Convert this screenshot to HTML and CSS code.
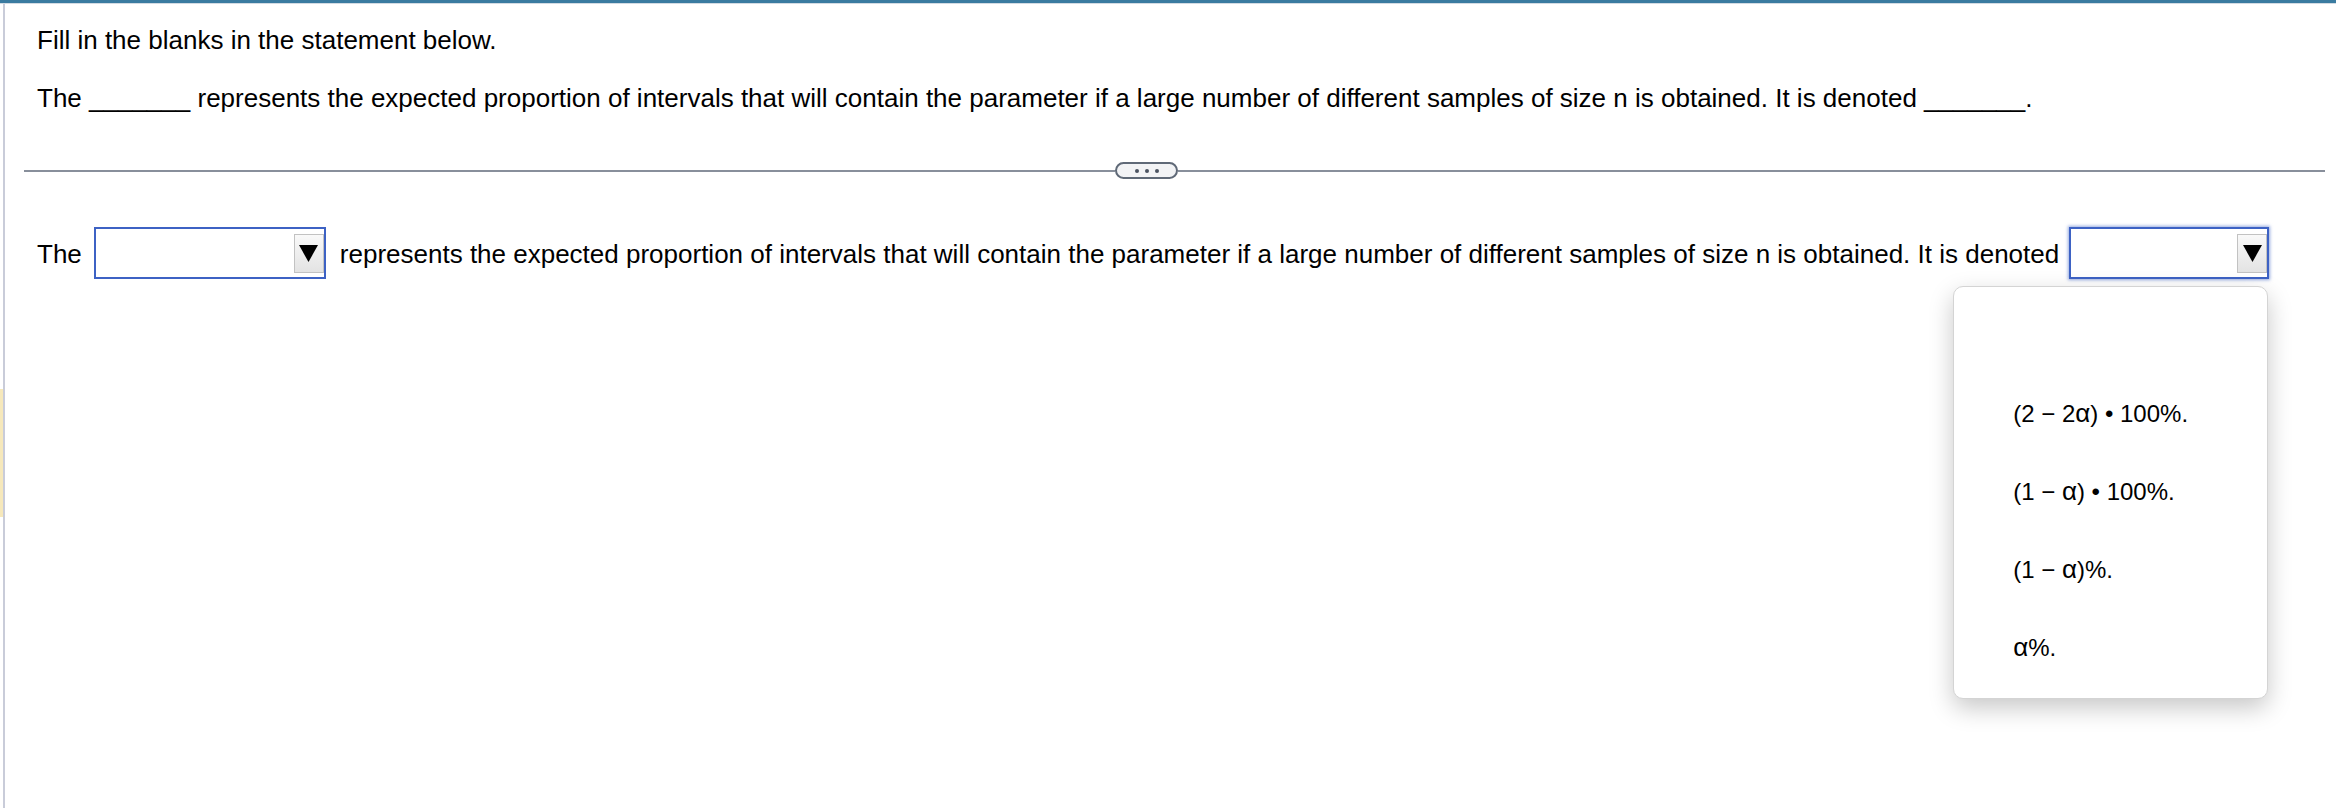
FILE: index.html
```html
<!DOCTYPE html>
<html lang="en">
<head>
<meta charset="utf-8">
<title>Fill in the blanks</title>
<link rel="stylesheet" href="styles.css">
</head>
<body>
<div class="topbar"></div>
<div class="frame">
  <div class="gutter"><div class="marker"></div></div>
  <main class="content">
    <p class="line instr">Fill in the blanks in the statement below.</p>
    <p class="line stmt">The _______ represents the expected proportion of intervals that will contain the parameter if a large number of different samples of size n is obtained. It is denoted _______.</p>
    <div class="divider">
      <span class="rule rule-left"></span>
      <button class="more" type="button" aria-label="Show more"><i></i><i></i><i></i></button>
      <span class="rule rule-right"></span>
    </div>
    <div class="answer">
      <span class="txt">The</span>
      <div class="select select-first">
        <span class="arrow"><svg width="19" height="17" viewBox="0 0 19 17"><polygon points="0,0 19,0 9.5,17" fill="#000"/></svg></span>
      </div>
      <span class="txt">represents the expected proportion of intervals that will contain the parameter if a large number of different samples of size n is obtained. It is denoted</span>
      <div class="select select-open">
        <span class="arrow"><svg width="19" height="17" viewBox="0 0 19 17"><polygon points="0,0 19,0 9.5,17" fill="#000"/></svg></span>
        <ul class="menu">
          <li>(2 − 2<span class="alpha">α</span>) • 100%.</li>
          <li>(1 − <span class="alpha">α</span>) • 100%.</li>
          <li>(1 − <span class="alpha">α</span>)%.</li>
          <li><span class="alpha">α</span>%.</li>
        </ul>
      </div>
    </div>
  </main>
</div>
</body>
</html>
```

FILE: styles.css
```css
html, body {
  margin: 0;
  padding: 0;
  background: #ffffff;
}

body {
  width: 2336px;
  height: 808px;
  overflow: hidden;
  font-family: "Liberation Sans", Arial, Helvetica, sans-serif;
  color: #000;
}

.topbar {
  height: 3px;
  background: #3a7ba0;
  border-bottom: 1px solid #d3dbe3;
}

.frame {
  display: flex;
  height: 804px;
}

.gutter {
  width: 3px;
  flex: 0 0 3px;
}

.marker {
  margin-top: 385px;
  height: 128px;
  background: #f6e8bb;
}

.content {
  flex: 1;
  border-left: 2px solid #c9ccd9;
  padding: 21px 11px 0 32px;
  font-size: 26px;
  line-height: 30px;
}

.line {
  margin: 0;
  white-space: nowrap;
}

.stmt {
  margin-top: 28px;
}

.divider {
  display: flex;
  align-items: center;
  margin: 49px 0 0 -13px;
  height: 17px;
}

.rule {
  height: 2px;
  background: #888f9b;
}

.rule-left {
  flex: 0 0 1091px;
}

.rule-right {
  flex: 1;
}

.more {
  box-sizing: border-box;
  width: 63px;
  height: 17px;
  padding: 0;
  border: 2px solid #5f6977;
  border-radius: 9px;
  background: #f2f3f5;
  display: flex;
  align-items: center;
  justify-content: center;
  gap: 6px;
}

.more i {
  display: block;
  width: 4px;
  height: 4px;
  border-radius: 50%;
  background: #4b5361;
}

.answer {
  display: flex;
  align-items: center;
  margin-top: 48px;
  height: 52px;
  white-space: nowrap;
}

.txt {
  padding-top: 2px;
}

.select {
  position: relative;
  box-sizing: border-box;
  height: 52px;
  border: 2px solid #3d62c4;
  background: #fff;
  display: flex;
  justify-content: flex-end;
  align-items: center;
}

.select-first {
  width: 232px;
  margin: 0 14px 0 12px;
}

.select-open {
  width: 200px;
  margin-left: 10px;
  box-shadow: 0 0 3px 1px rgba(61, 98, 196, 0.55);
}

.arrow {
  box-sizing: border-box;
  width: 30px;
  height: 39px;
  border: 1px solid #c2c2c2;
  background: linear-gradient(#f9f9f9, #e3e3e3);
  display: flex;
  align-items: center;
  justify-content: center;
}

.arrow svg {
  display: block;
}

.menu {
  position: absolute;
  top: calc(100% + 9px);
  right: -1px;
  box-sizing: border-box;
  width: 315px;
  height: 413px;
  margin: 0;
  padding: 88px 0 11px 59px;
  list-style: none;
  background: #fff;
  border: 1px solid #d4d4d4;
  border-radius: 10px;
  box-shadow: 0 9px 24px rgba(0, 0, 0, 0.22);
  font-size: 24px;
  line-height: 78px;
}

.menu li {
  height: 78px;
}

.alpha {
  font-size: 26px;
  line-height: 1;
}
```
